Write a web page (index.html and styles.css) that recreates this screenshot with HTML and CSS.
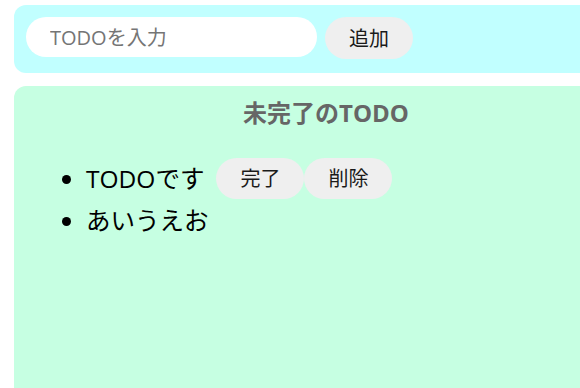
FILE: index.html
```html
<!DOCTYPE html>
<html lang="ja">
<head>
<meta charset="utf-8">
<title>TODO</title>
<link rel="stylesheet" href="styles.css">
</head>
<body>
<div class="input-area">
  <input class="todo-input" type="text" placeholder="TODOを入力">
  <button class="btn">追加</button>
</div>
<div class="incomplete-area">
  <p class="title">未完了のTODO</p>
  <ul class="todo-list">
    <div class="list-row">
      <li class="item">TODOです</li>
      <button class="btn">完了</button><button class="btn">削除</button>
    </div>
    <div class="list-row">
      <li class="item">あいうえお</li>
    </div>
  </ul>
</div>
</body>
</html>
```

FILE: styles.css
```css
html, body {
  margin: 0;
  padding: 0;
  overflow: hidden;
  background: #ffffff;
}
body {
  font-family: "Open Sans", "Noto Sans CJK JP", sans-serif;
  color: #000;
  width: 580px;
  height: 388px;
}
.input-area {
  box-sizing: border-box;
  background-color: #c1ffff;
  width: 624px;
  height: 68px;
  padding: 12px;
  margin: 5px 0 13px 14px;
  border-radius: 12px;
  display: flex;
  align-items: flex-start;
  gap: 8px;
}
.todo-input {
  box-sizing: border-box;
  width: 291px;
  height: 40px;
  margin: 0;
  border: none;
  outline: none;
  border-radius: 20px;
  padding: 0 24px;
  font-family: inherit;
  font-size: 20px;
  background: #fff;
  color: #000;
}
.todo-input::placeholder {
  color: #757575;
}
.btn {
  box-sizing: border-box;
  height: 41px;
  margin: 0;
  border: none;
  border-radius: 21px;
  padding: 0 24px;
  background-color: #efefef;
  color: #1a1a1a;
  font-family: inherit;
  font-size: 20px;
  line-height: 41px;
}
.input-area .btn {
  height: 42px;
  width: 88px;
  padding: 0;
}
.incomplete-area {
  box-sizing: border-box;
  background-color: #c6ffe2;
  width: 624px;
  min-height: 330px;
  padding: 12px;
  margin: 0 0 0 14px;
  border-radius: 12px;
}
.title {
  margin: 0 0 30px 0;
  text-align: center;
  font-weight: bold;
  font-size: 24px;
  line-height: 30px;
  color: #666;
}
.todo-list {
  margin: 0;
  padding-left: 60px;
}
.list-row {
  display: flex;
  align-items: center;
  padding-bottom: 6px;
}
.list-row .btn {
  width: 88px;
  padding: 0;
}
.item {
  font-size: 24.5px;
  line-height: 32px;
  margin-right: 12px;
}
```
